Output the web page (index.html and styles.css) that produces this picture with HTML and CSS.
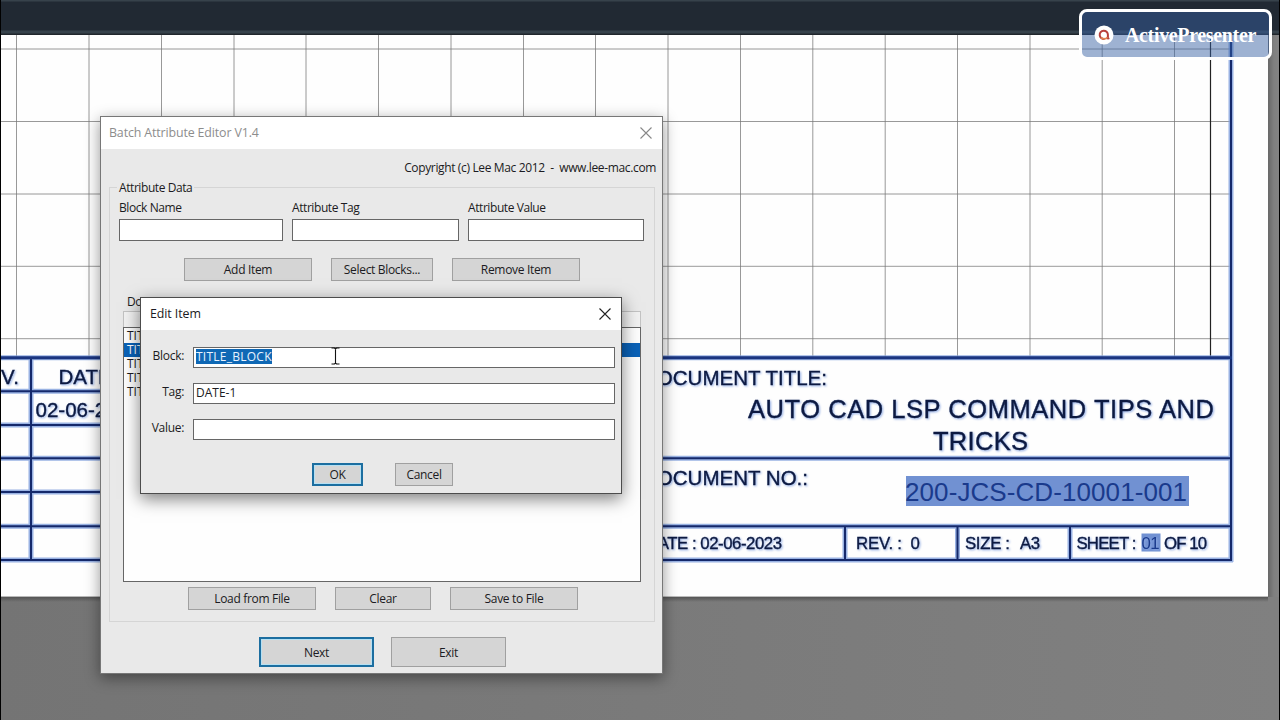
FILE: index.html
```html
<!DOCTYPE html>
<html lang="en">
<head>
<meta charset="utf-8">
<title>Batch Attribute Editor</title>
<link rel="stylesheet" href="styles.css">
</head>
<body>
<main class="desktop">
  <svg class="drawing" width="1280" height="720" viewBox="0 0 1280 720">
    <defs>
      <linearGradient id="edge" x1="0" x2="1" y1="0" y2="0"><stop offset="0" stop-color="#686868"/><stop offset=".5" stop-color="#808080"/><stop offset="1" stop-color="#848484"/></linearGradient>
      <linearGradient id="under" x1="0" x2="0" y1="0" y2="1"><stop offset="0" stop-color="#555"/><stop offset="1" stop-color="#555" stop-opacity="0"/></linearGradient>
      <linearGradient id="floor" x1="0" x2="1" y1="0" y2="0"><stop offset="0" stop-color="#747474"/><stop offset="1" stop-color="#808080"/></linearGradient>
    </defs>
    <rect width="1280" height="720" fill="url(#floor)"/>
    <rect x="1268" y="34" width="12" height="563" fill="url(#edge)"/>
    <rect y="597" width="1268" height="5" fill="url(#under)"/>
    <rect y="34" width="1268" height="562.5" fill="#fefefe"/>
    <path class="grid" d="M16.5 34V357M89 34V357M161.5 34V357M234 34V357M306 34V357M378.5 34V357M451 34V357M523.5 34V357M595.5 34V357M668 34V357M740.5 34V357M812.8 34V357M885.2 34V357M957.5 34V357M1030 34V357M1102.2 34V357M1174.5 34V357M0 49H1231M0 121.5H1231M0 194H1231M0 266.3H1231M0 338.7H1231"/>
    <path class="inner-edge" d="M1210.5 34V357"/>
    <path class="halo" d="M0 357.8H1232M0 391.3H110M0 425H110M0 458.3H110M0 492H110M0 526.3H110M0 560H110M31 357V561M650 458.3H1232M650 526.3H1232M650 560H1233M845 526V561M957.5 526V561M1070 526V561M1231 34V562"/>
    <path class="rule" d="M0 391.3H110M0 425H110M0 458.3H110M0 492H110M0 526.3H110M0 560H110M31 357V561M650 458.3H1232M650 526.3H1232M650 560H1232M845 526V561M957.5 526V561M1070 526V561M1231 34V561"/>
    <path class="rule heavy" d="M0 357.8H1232"/>
    <g class="label">
      <text x="1" y="384" textLength="18">V.</text>
      <text x="58.500" y="384">DATE</text>
      <text x="35.500" y="416.500">02-06-2023</text>
      <text x="827" y="384.500" text-anchor="end" textLength="185">DOCUMENT TITLE:</text>
      <text x="808" y="485" text-anchor="end" textLength="166">DOCUMENT NO.:</text>
    </g>
    <g class="title">
      <text x="748" y="418" textLength="466">AUTO CAD LSP COMMAND TIPS AND</text>
      <text x="933" y="450" textLength="95">TRICKS</text>
    </g>
    <rect class="field" x="906" y="476" width="283" height="30"/>
    <text class="number" x="905" y="501" textLength="282">200-JCS-CD-10001-001</text>
    <rect class="field" x="1141.500" y="533.500" width="19" height="18"/>
    <g class="small">
      <text x="782" y="549" text-anchor="end" textLength="136">DATE : 02-06-2023</text>
      <text x="856" y="549" textLength="46">REV. :</text>
      <text x="910.500" y="549">0</text>
      <text x="965" y="549" textLength="45">SIZE :</text>
      <text x="1020" y="549" textLength="20">A3</text>
      <text x="1076.500" y="549" textLength="60">SHEET :</text>
      <text class="plain" x="1141.500" y="549" textLength="18">01</text>
      <text x="1164" y="549" textLength="43">OF 10</text>
    </g>
  </svg>
  <header class="topbar"></header>

  <section class="window editor">
    <div class="titlebar inactive"><span class="caption">Batch Attribute Editor V1.4</span>
      <svg class="close" width="12" height="12" viewBox="0 0 12 12"><path d="M.5 .5L11.500 11.500M11.500 .5L.5 11.500"/></svg></div>
    <div class="copyright">Copyright (c) Lee Mac 2012&nbsp; -&nbsp; www.lee-mac.com</div>
    <div class="group">
      <div class="legend"><span>Attribute Data</span></div>
      <div class="fields">
        <label>Block Name<span class="input"></span></label>
        <label>Attribute Tag<span class="input"></span></label>
        <label>Attribute Value<span class="input"></span></label>
      </div>
      <div class="buttons item-actions"><span class="button">Add Item</span><span class="button narrow">Select Blocks...</span><span class="button">Remove Item</span></div>
      <div class="hint">Do</div>
      <div class="list-head"></div>
      <div class="list"><div>TIT</div><div class="selected">TIT</div><div>TIT</div><div>TIT</div><div>TIT</div></div>
      <div class="buttons file-actions"><span class="button">Load from File</span><span class="button clear">Clear</span><span class="button">Save to File</span></div>
    </div>
    <div class="buttons footer"><span class="button default">Next</span><span class="button">Exit</span></div>
  </section>

  <section class="window edit-item">
    <div class="titlebar"><span class="caption">Edit Item</span>
      <svg class="close" width="12" height="12" viewBox="0 0 12 12"><path d="M.5 .5L11.500 11.500M11.500 .5L.5 11.500"/></svg></div>
    <div class="form">
      <span class="name">Block:</span><span class="input"><mark>TITLE_BLOCK</mark></span>
      <span class="name">Tag:</span><span class="input tag">DATE-1</span>
      <span class="name">Value:</span><span class="input"></span>
    </div>
    <div class="buttons confirm"><span class="button default">OK</span><span class="button cancel">Cancel</span></div>
  </section>

  <svg class="ibeam" width="9" height="18" viewBox="0 0 9 18"><path d="M.5 1H3.500L4.500 2L5.500 1H8.500M4.500 2V16M.5 17H3.500L4.500 16L5.500 17H8.500"/></svg>

  <aside class="watermark">
    <svg width="20" height="20" viewBox="0 0 20 20"><circle cx="10" cy="10" r="9.500" fill="#fff"/><path d="M13.900 14.200V9.800A4.100 4.100 0 1 0 10.600 13.800" fill="none" stroke="#b8403c" stroke-width="2"/><path d="M7 12.500A4.100 4.100 0 0 0 13.500 12.200" fill="none" stroke="#df8350" stroke-width="1.800"/><path d="M13.500 13.500H15.500" stroke="#b8403c" stroke-width="1.400"/></svg>
    <span>ActivePresenter</span>
  </aside>
  <div class="frame"></div>
</main>
</body>
</html>
```

FILE: styles.css
```css
* { box-sizing: border-box; }
body { margin: 0; }
.desktop { position: relative; width: 1280px; height: 720px; overflow: hidden; font: 12px/14px "Open Sans", "Noto Sans", sans-serif; color: #1b1b22; }
.drawing { display: block; font-family: "Liberation Sans", Arial, sans-serif; }
.grid { stroke: #777; stroke-opacity: .75; stroke-width: 1; fill: none; }
.inner-edge { stroke: #222; stroke-width: 1.2; }
.halo { stroke: #7f9fdc; stroke-opacity: .8; stroke-width: 5; fill: none; }
.rule { stroke: #15296b; stroke-width: 2; fill: none; }
.rule.heavy { stroke: #1b3580; stroke-width: 3; }
.drawing text { fill: #0d1a42; stroke: #0d1a42; stroke-width: .35; }
.label, .title, .small { filter: drop-shadow(1px 1px .8px #8fabe4); }
.label { font-size: 20.5px; }
.title { font-size: 25.5px; }
.drawing .number { font-size: 26px; fill: #1a3a8c; stroke: none; }
.small { font-size: 16.8px; }
.drawing .plain { fill: #1a3a8c; stroke: none; }
.field { fill: #7191d2; }
.topbar { position: absolute; inset: 0 0 auto; height: 35px; background: linear-gradient(#37424b 0 1px, #212933 2px 30px, #36424b 31px 33px, #20262c 34px); }
.frame { position: absolute; inset: 0; border: solid #000; border-width: 0 1px; }

.window { position: absolute; background: #e9e9e9; border: 1px solid #777; display: flex; flex-direction: column; }
.editor { left: 100px; top: 116px; width: 563px; height: 558px; box-shadow: 0 4px 14px rgba(0,0,0,.42); }
.edit-item { left: 140px; top: 297px; width: 482px; height: 197px; border-color: #4c4c4c; box-shadow: 0 5px 16px rgba(0,0,0,.5); }
.titlebar { height: 32px; flex: none; background: #fff; display: flex; align-items: center; justify-content: space-between; padding: 0 10px 1px 9px; }
.inactive { padding: 0 10px 1px 8px; color: #8d8d8d; }
.caption { font-size: 12.4px; letter-spacing: -.08px; }
.inactive .caption { letter-spacing: -.13px; }
.close { fill: none; stroke: #222; stroke-width: 1.1; }
.inactive .close { stroke: #888; }
.copyright { height: 38px; padding: 12px 6px 0; text-align: right; letter-spacing: -.36px; }
.group { margin: 0 7px 0 8px; height: 435px; flex: none; border: 1px solid #d5d5d5; display: flex; flex-direction: column; letter-spacing: -.42px; }
.legend { margin-top: -7px; padding-left: 7px; height: 14px; }
.legend span { background: #e9e9e9; padding: 0 2px; }
.fields { display: grid; grid-template-columns: 165px 168px 177px; column-gap: 8px; padding: 6px 0 0 9px; margin-right: -4px; }
.fields label { display: grid; gap: 4px; }
.input { display: block; height: 22px; margin-right: 1px; background: #fff; border: 1px solid #666; }
.fields .input { position: relative; left: -.5px; }
.buttons { display: flex; letter-spacing: -.32px; }
.button { display: flex; align-items: center; justify-content: center; width: 128px; height: 23px; background: #d5d5d5; border: 1px solid #a0a0a0; }
.item-actions { gap: 19px; margin: 17px 0 0 74px; }
.default { border: 2px solid #1c6ea0; box-shadow: inset 0 0 0 1px #b5e0f3; }
.narrow { width: 102px; }
.hint { margin: 14px 0 0 17px; }
.list-head { height: 16px; margin: 2px 13px 0 13px; background: #f2f2f2; border: 1px solid #c3c3c3; border-bottom: 0; }
.list { height: 255px; margin: 0 13px 0 13px; padding-top: 1px; background: #fefefe; border: 1px solid #666; letter-spacing: 0; }
.list div { height: 14px; padding-left: 3px; }
.list .selected { background: #0a62b8; color: #fff; }
.file-actions { gap: 19px; margin: 5px 0 0 78px; }
.clear { width: 96px; }
.footer { gap: 17px; margin: 15px 0 0 158px; }
.footer .button { width: 115px; height: 30px; padding-top: 1px; }
.form { display: grid; grid-template-columns: 43px 423px; column-gap: 9px; row-gap: 15px; padding: 17px 0 0; letter-spacing: -.3px; }
.form .input { height: 21px; padding: 1px 0 0 2px; line-height: 15px; letter-spacing: 0; }
.name { text-align: right; padding-top: 2px; }
mark { display: inline-block; height: 15px; line-height: 15px; background: #0f68b5; color: #e9f3ff; vertical-align: top; letter-spacing: .25px; }
.confirm { gap: 32px; margin: 23px 0 0 171px; }
.confirm .button { width: 51px; }
.confirm .cancel { width: 58px; }
.ibeam { position: absolute; left: 331px; top: 347px; fill: none; stroke: #111; stroke-width: 1.1; }
.watermark { position: absolute; left: 1079px; top: 9px; width: 193px; height: 51px; border: 3.5px solid #fff; border-radius: 8px; background: rgba(54,96,164,.48); display: flex; align-items: center; gap: 11px; padding-left: 12px; color: #fff; font: bold 20px/24px "Liberation Serif", "Times New Roman", serif; letter-spacing: -.35px; }
```
